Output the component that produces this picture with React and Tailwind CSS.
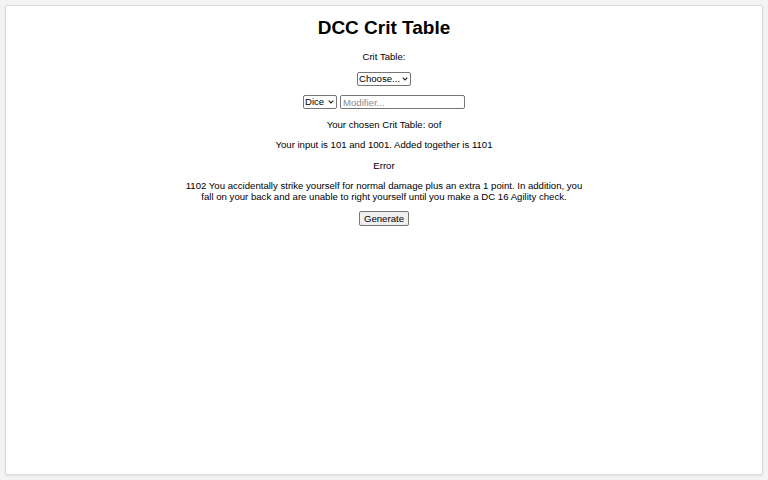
import React from 'react'

const Chevron = () => (
  <svg
    className="pointer-events-none absolute right-[3px] top-1/2 -translate-y-1/2"
    width="6"
    height="4"
    viewBox="0 0 6 4"
    fill="none"
  >
    <path d="M0.7 0.7 L3 3 L5.3 0.7" stroke="#222" strokeWidth="1.1" />
  </svg>
)

const Select = ({ label, width }) => (
  <div className={`relative flex ${width}`}>
    <select className="appearance-none w-full h-[14px] text-[9.6px] leading-[12px] border border-[#767676] rounded-[2px] bg-white pl-[1px] pr-[8px] outline-none">
      <option>{label}</option>
    </select>
    <Chevron />
  </div>
)

const App = () => {
  return (
    <div className="min-h-screen w-full bg-[#f3f3f3] p-[5px] font-['Liberation_Sans',Arial,sans-serif] text-black">
      <div className="h-[470px] bg-white border border-[#dcdcdc] rounded-[2px] shadow-[0_1px_2px_rgba(0,0,0,0.08)] flex flex-col items-center pt-[11px]">
        <h1 className="text-[19px] leading-[22px] font-bold">DCC Crit Table</h1>

        <label className="mt-[12px] text-[9.6px] leading-[11px]">Crit Table:</label>

        <div className="mt-[10px] flex">
          <Select label="Choose..." width="w-[54px]" />
        </div>

        <div className="mt-[9px] flex items-center gap-[3px]">
          <Select label="Dice" width="w-[34px]" />
          <input
            className="h-[14px] w-[125px] text-[9.6px] leading-[12px] border border-[#767676] rounded-[2px] px-[2px] placeholder:text-[#8a8a8a] outline-none"
            placeholder="Modifier..."
          />
        </div>

        <p className="mt-[10px] text-[9.6px] leading-[11px]">Your chosen Crit Table: oof</p>
        <p className="mt-[9px] text-[9.6px] leading-[11px]">Your input is 101 and 1001. Added together is 1101</p>
        <p className="mt-[9.5px] text-[9.6px] leading-[11px]">Error</p>
        <p className="mt-[9px] w-[400px] text-center text-[9.6px] leading-[11px]">
          1102 You accidentally strike yourself for normal damage plus an extra 1 point. In addition, you fall on your back and are unable to right yourself until you make a DC 16 Agility check.
        </p>

        <button className="mt-[9.5px] h-[15px] px-[4px] text-[9.6px] leading-[11px] bg-[#efefef] border border-[#767676] rounded-[2px]">
          Generate
        </button>
      </div>
    </div>
  )
}

export default App
